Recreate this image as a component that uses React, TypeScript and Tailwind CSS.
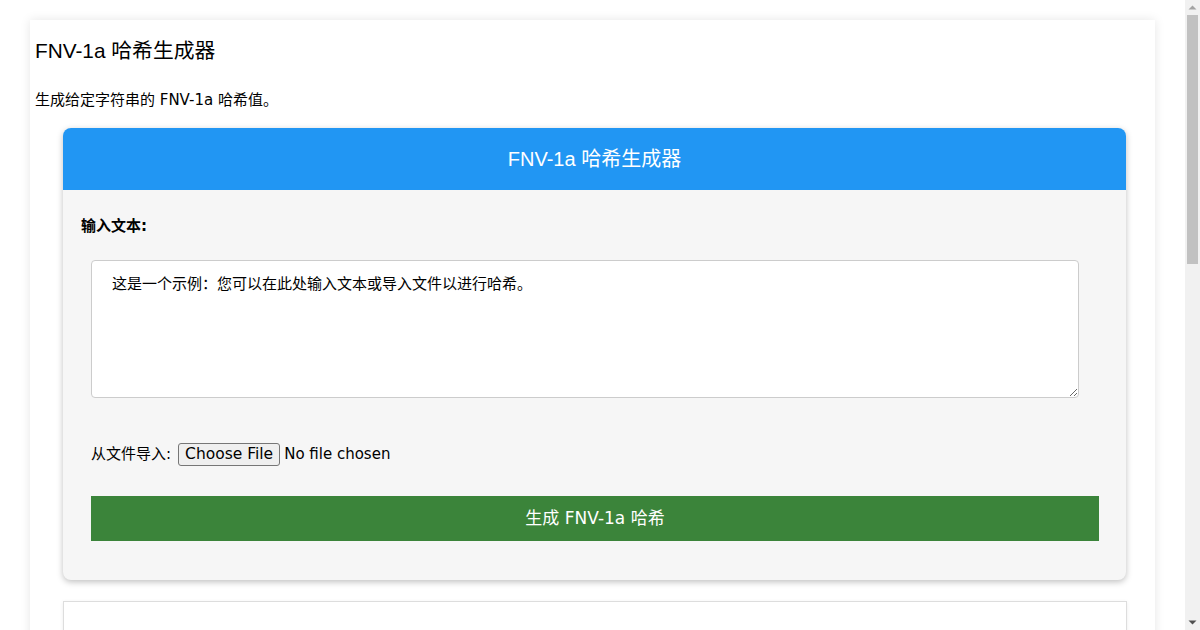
import { useState } from 'react'

const sans = 'font-["DejaVu_Sans","Noto_Sans_CJK_SC",sans-serif]'
const arial = 'font-["Liberation_Sans","Noto_Sans_CJK_SC",sans-serif]'

function Scrollbar() {
  // classic page scrollbar as seen in the screenshot
  return (
    <div className="fixed top-0 right-0 flex h-screen w-[15px] flex-col items-center bg-[#f1f1f1]">
      <svg width="15" height="15" viewBox="0 0 15 15" className="shrink-0">
        <path d="M3.5 9.5 L7.5 5.5 L11.5 9.5 Z" fill="#a3a3a3" />
      </svg>
      <div className="h-[249px] w-[11px] bg-[#c1c1c1]" />
      <div className="flex-1" />
      <svg width="15" height="15" viewBox="0 0 15 15" className="shrink-0">
        <path d="M3.5 5.5 L11.5 5.5 L7.5 9.5 Z" fill="#505050" />
      </svg>
    </div>
  )
}

export default function App() {
  const [text, setText] = useState('这是一个示例：您可以在此处输入文本或导入文件以进行哈希。')

  return (
    <div className={`min-h-screen bg-white pr-[15px] ${sans} text-black`}>
      <div className="mx-[30px] mt-[20px] mb-[20px] bg-white px-[5px] pt-[19px] pb-[20px] shadow-[0_0_10px_rgba(0,0,0,0.1)]">
        <h1 className={`${arial} text-[20.8px] leading-[23px] font-normal`}>FNV-1a 哈希生成器</h1>
        <p className="mt-[30px] text-[15px] leading-[17px]">生成给定字符串的 FNV-1a 哈希值。</p>

        {/* generator card */}
        <div className="mt-[19px] ml-[28px] w-[1063px] overflow-hidden rounded-[8px] bg-[#f6f6f6] shadow-[0_2px_6px_rgba(0,0,0,0.25)]">
          <div className={`flex h-[62px] items-center justify-center bg-[#2196f3] ${arial} text-[20px] text-white`}>
            FNV-1a 哈希生成器
          </div>
          <div className="px-[18px] pt-[27px] pb-[39px]">
            <label className="block text-[15px] leading-[18px] font-bold">输入文本:</label>
            <textarea
              value={text}
              onChange={(e) => setText(e.target.value)}
              className="mt-[25px] ml-[10px] block h-[138px] w-[988px] rounded-[4px] border border-[#cccccc] bg-white px-[20px] pt-[15px] text-[15px] leading-[17px] outline-none"
            />
            <div className="mt-[45px] ml-[10px] flex h-[23px] items-center text-[15px]">
              <span>从文件导入:</span>
              <input
                type="file"
                className="ml-[7px] text-[15px] file:mr-[4px] file:h-[23px] file:rounded-[3px] file:border file:border-[#767676] file:bg-[#efefef] file:px-[6px] file:text-[15.5px] file:leading-[19px]"
              />
            </div>
            <button className="mt-[30px] ml-[10px] flex h-[45px] w-[1008px] items-center justify-center bg-[#3b843a] text-[17px] text-white">
              生成 FNV-1a 哈希
            </button>
          </div>
        </div>

        {/* result card */}
        <div className="mt-[21px] ml-[28px] h-[860px] w-[1064px] border border-[#dddddd] bg-white shadow-[0_1px_4px_rgba(0,0,0,0.08)]" />
      </div>
      <Scrollbar />
    </div>
  )
}
